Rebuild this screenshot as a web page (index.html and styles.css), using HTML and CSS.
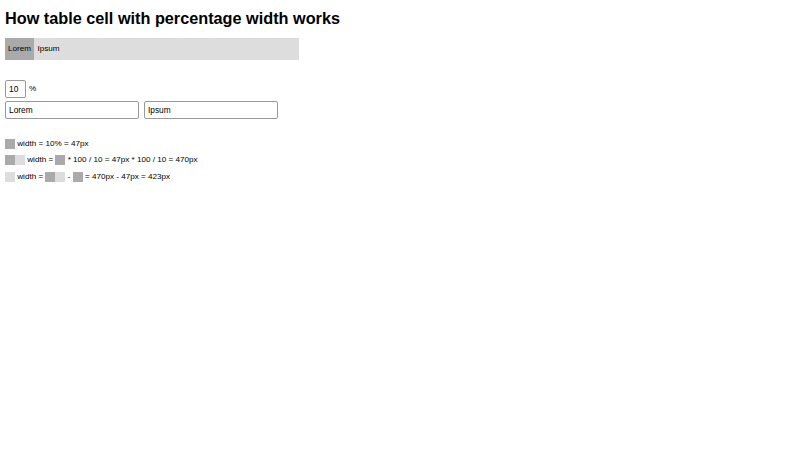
FILE: index.html
```html
<!DOCTYPE html>
<html>
<head>
<meta charset="utf-8">
<link rel="stylesheet" href="styles.css">
</head>
<body>
<h1 class="title">How table cell with percentage width works</h1>
<table class="demo">
  <tr>
    <td class="cell cell-a" style="width: 10%">Lorem</td>
    <td class="cell cell-b">Ipsum</td>
  </tr>
</table>
<div class="controls">
  <div class="row"><input class="field field-pct" type="text" value="10"><span class="unit">%</span></div>
  <div class="row"><input class="field field-text" type="text" value="Lorem"><input class="field field-text" type="text" value="Ipsum"></div>
</div>
<div class="legend">
  <div class="line"><span class="sq dark"></span> width = 10% = 47px</div>
  <div class="line"><span class="sq dark"></span><span class="sq light"></span> width = <span class="sq dark"></span> * 100 / 10 = 47px * 100 / 10 = 470px</div>
  <div class="line"><span class="sq light"></span> width = <span class="sq dark"></span><span class="sq light"></span> - <span class="sq dark"></span> = 470px - 47px = 423px</div>
</div>
</body>
</html>
```
FILE: styles.css
```css
html { background: #fff; }
body {
  margin: 5px;
  font-family: "Liberation Sans", Arial, sans-serif;
  font-size: 8.125px;
  color: #000;
}
.title {
  font-size: 16.25px;
  font-weight: bold;
  margin: 3.5px 0 10px;
}
.demo {
  width: 293.75px;
  border-collapse: collapse;
  border-spacing: 0;
}
.cell {
  padding: 5.5px 3px;
  line-height: 11px;
  white-space: nowrap;
}
.cell-a { background: #aaaaaa; }
.cell-b { background: #dddddd; }
.controls {
  margin-top: 20px;
  display: flex;
  flex-direction: column;
  gap: 3px;
}
.row {
  display: flex;
  align-items: center;
  gap: 5.5px;
}
.field {
  box-sizing: border-box;
  height: 18px;
  border: 1px solid #9a9a9a;
  border-radius: 2px;
  font-family: "Liberation Sans", Arial, sans-serif;
  font-size: 8.33px;
  padding: 0 3px;
  margin: 0;
  background: #fff;
  color: #000;
}
.field-pct { width: 21px; }
.field-text { width: 133.5px; }
.unit { margin-left: -2.5px; }
.legend {
  margin-top: 20px;
}
.line {
  height: 10px;
  line-height: 10px;
  margin-bottom: 6.5px;
  white-space: nowrap;
}
.sq {
  display: inline-block;
  vertical-align: top;
  width: 10px;
  height: 10px;
}
.dark { background: #aaaaaa; }
.light { background: #dddddd; }
```
